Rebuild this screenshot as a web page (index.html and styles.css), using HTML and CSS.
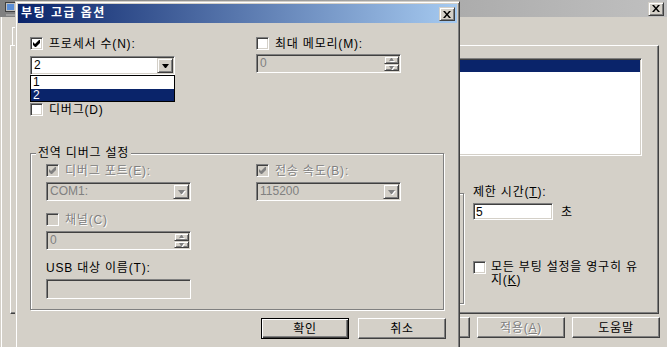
FILE: index.html
```html
<!DOCTYPE html>
<html lang="ko">
<head>
  <meta charset="UTF-8">
  <meta name="viewport" content="width=device-width, initial-scale=1.0">
  <title>부팅 고급 옵션</title>
  <link rel="stylesheet" href="styles.css">
</head>
<body>
  <div class="desk">
    <!-- 뒤쪽 시스템 구성 창 -->
    <div class="bg-win">
      <div class="bg-title">
        <svg class="app-icon" width="11" height="14" viewBox="0 0 11 14">
          <rect x="0.5" y="0.5" width="10" height="9" fill="#c0c0c0" stroke="#404040"/>
          <rect x="2" y="2" width="7" height="6" fill="#5a8ed8"/>
          <rect x="3" y="10" width="5" height="2" fill="#808080"/>
          <rect x="1" y="12" width="9" height="2" fill="#a0a0a0"/>
        </svg>
        <span class="btn-x">
          <svg width="8" height="7" viewBox="0 0 8 7"><path d="M0 0h2l2 2.5L6 0h2L5 3.5 8 7H6L4 4.5 2 7H0l3-3.5z"/></svg>
        </span>
      </div>
      <div class="bg-tab"></div>
      <div class="bg-panel">
        <div class="bg-list"><div class="bg-list-sel"></div></div>
        <div class="bg-lower">
          <div class="bg-group"></div>
          <div class="bg-side">
            <div class="lbl">제한 시간(<u>T</u>):</div>
            <div class="timeout">
              <span class="field field-timeout">5</span>
              <span class="unit">초</span>
            </div>
            <div class="check check-keep">
              <span class="box"></span>
              <span>모든 부팅 설정을 영구히 유<br>지(<u>K</u>)</span>
            </div>
          </div>
        </div>
      </div>
      <div class="bg-buttons">
        <button class="btn">취소</button>
        <button class="btn dis">적용(<u>A</u>)</button>
        <button class="btn">도움말</button>
      </div>
    </div>

    <!-- 부팅 고급 옵션 대화 상자 -->
    <div class="dialog">
      <div class="dlg-title">
        <span>부팅 고급 옵션</span>
        <span class="btn-x">
          <svg width="8" height="7" viewBox="0 0 8 7"><path d="M0 0h2l2 2.5L6 0h2L5 3.5 8 7H6L4 4.5 2 7H0l3-3.5z"/></svg>
        </span>
      </div>
      <div class="dlg-body">
        <div class="cols">
          <div class="col">
            <div class="check">
              <span class="box"><svg width="7" height="7" viewBox="0 0 7 7"><path d="M0 2L2 4L6 0H7V3L3 7H2L0 5Z"/></svg></span>
              <span>프로세서 수(N):</span>
            </div>
            <div class="combo combo-cpu">
              <span class="combo-val">2</span>
              <span class="drop"><svg width="7" height="4" viewBox="0 0 7 4"><path d="M0 0H7L4 4H3Z"/></svg></span>
            </div>
            <div class="check check-debug">
              <span class="box"></span>
              <span>디버그(D)</span>
            </div>
          </div>
          <div class="col">
            <div class="check">
              <span class="box"></span>
              <span>최대 메모리(M):</span>
            </div>
            <div class="spin off spin-mem">
              <span class="combo-val">0</span>
              <span class="spin-btns">
                <span class="spin-b"><svg width="5" height="3" viewBox="0 0 5 3"><path d="M2 0H3L5 3H0Z"/></svg></span>
                <span class="spin-b"><svg width="5" height="3" viewBox="0 0 5 3"><path d="M0 0H5L3 3H2Z"/></svg></span>
              </span>
            </div>
          </div>
        </div>

        <div class="droplist">
          <div class="opt">1</div>
          <div class="opt sel">2</div>
        </div>

        <div class="group">
          <span class="legend">전역 디버그 설정</span>
          <div class="cols cols-group">
            <div class="col">
              <div class="check dis">
                <span class="box off"><svg width="7" height="7" viewBox="0 0 7 7"><path d="M0 2L2 4L6 0H7V3L3 7H2L0 5Z"/></svg></span>
                <span>디버그 포트(E):</span>
              </div>
              <div class="combo off combo-port">
                <span class="combo-val">COM1:</span>
                <span class="drop"><svg width="7" height="4" viewBox="0 0 7 4"><path d="M0 0H7L4 4H3Z"/></svg></span>
              </div>
              <div class="check dis check-chan">
                <span class="box off"></span>
                <span>채널(C)</span>
              </div>
              <div class="spin off spin-chan">
                <span class="combo-val">0</span>
                <span class="spin-btns">
                  <span class="spin-b"><svg width="5" height="3" viewBox="0 0 5 3"><path d="M2 0H3L5 3H0Z"/></svg></span>
                  <span class="spin-b"><svg width="5" height="3" viewBox="0 0 5 3"><path d="M0 0H5L3 3H2Z"/></svg></span>
                </span>
              </div>
              <div class="lbl lbl-usb">USB 대상 이름(T):</div>
              <div class="field off field-usb"></div>
            </div>
            <div class="col">
              <div class="check dis">
                <span class="box off"><svg width="7" height="7" viewBox="0 0 7 7"><path d="M0 2L2 4L6 0H7V3L3 7H2L0 5Z"/></svg></span>
                <span>전송 속도(B):</span>
              </div>
              <div class="combo off combo-port">
                <span class="combo-val">115200</span>
                <span class="drop"><svg width="7" height="4" viewBox="0 0 7 4"><path d="M0 0H7L4 4H3Z"/></svg></span>
              </div>
            </div>
          </div>
        </div>

        <div class="dlg-buttons">
          <button class="btn default">확인</button>
          <button class="btn">취소</button>
        </div>
      </div>
    </div>
  </div>
</body>
</html>
```

FILE: styles.css
```css
body {
  margin: 0;
  background-color: #d4d0c8;
  font-family: "Liberation Sans", "Noto Sans CJK KR", sans-serif;
  font-size: 12px;
  line-height: 14px;
  color: #000;
}
.desk {
  position: relative;
  width: 667px;
  height: 347px;
  overflow: hidden;
  letter-spacing: 0.8px;
}

/* 공통 컨트롤 */
.btn {
  box-sizing: border-box;
  width: 88px;
  height: 21px;
  padding: 0;
  font: inherit;
  letter-spacing: inherit;
  color: #000;
  background-color: #d4d0c8;
  border: 1px solid;
  border-color: #fff #404040 #404040 #fff;
  box-shadow: inset -1px -1px #808080;
}
.btn.default {
  border-color: #000;
  box-shadow: inset 1px 1px #fff, inset -1px -1px #404040, inset -2px -2px #808080;
}
.dis,
.btn.dis {
  color: #808080;
  text-shadow: 1px 1px 0 #fff;
}
.btn-x {
  box-sizing: border-box;
  width: 16px;
  height: 14px;
  display: flex;
  align-items: center;
  justify-content: center;
  background-color: #d4d0c8;
  border: 1px solid;
  border-color: #d4d0c8 #404040 #404040 #d4d0c8;
  box-shadow: inset 1px 1px #fff, inset -1px -1px #808080;
}
.check {
  display: flex;
  align-items: center;
  gap: 6px;
  height: 13px;
}
.box {
  box-sizing: border-box;
  flex: none;
  width: 13px;
  height: 13px;
  display: flex;
  align-items: center;
  justify-content: center;
  background-color: #fff;
  border: 1px solid;
  border-color: #808080 #fff #fff #808080;
  box-shadow: inset 1px 1px #404040, inset -1px -1px #d4d0c8;
}
.box.off {
  background-color: #d4d0c8;
}
.box.off svg {
  fill: #808080;
}
.field,
.combo,
.spin {
  box-sizing: border-box;
  display: flex;
  align-items: center;
  padding: 1px;
  background-color: #fff;
  border: 1px solid;
  border-color: #808080 #fff #fff #808080;
  box-shadow: inset 1px 1px #404040, inset -1px -1px #d4d0c8;
}
.combo,
.spin {
  width: 145px;
  height: 19px;
}
.off {
  background-color: #d4d0c8;
  color: #808080;
}
.combo-val {
  flex: 1;
  padding-left: 2px;
  line-height: 15px;
  letter-spacing: 0;
}
.drop {
  box-sizing: border-box;
  width: 16px;
  height: 15px;
  display: flex;
  align-items: center;
  justify-content: center;
  background-color: #d4d0c8;
  border: 1px solid;
  border-color: #d4d0c8 #404040 #404040 #d4d0c8;
  box-shadow: inset 1px 1px #fff, inset -1px -1px #808080;
}
.off .drop svg,
.off .spin-b svg {
  fill: #808080;
  filter: drop-shadow(1px 1px 0 #fff);
}
.spin-btns {
  display: flex;
  flex-direction: column;
  width: 15px;
  height: 15px;
}
.spin-b {
  box-sizing: border-box;
  flex: 1;
  display: flex;
  align-items: center;
  justify-content: center;
  background-color: #d4d0c8;
  border: 1px solid;
  border-color: #d4d0c8 #404040 #404040 #d4d0c8;
  box-shadow: inset 1px 1px #fff, inset -1px -1px #808080;
}

/* 뒤쪽 창 */
.bg-win {
  height: 347px;
  box-shadow: inset 1px 0 #d4d0c8, inset 2px 0 #fff;
}
.bg-title {
  height: 17px;
  display: flex;
  align-items: center;
  justify-content: space-between;
  padding: 0 3px 0 5px;
  background: linear-gradient(to right, #808080, #c0c0c0);
}
.bg-tab {
  width: 200px;
  height: 17px;
  margin: 10px 0 0 12px;
  border-top: 1px solid #fff;
  border-left: 1px solid #fff;
}
.bg-panel {
  box-sizing: border-box;
  width: 649px;
  height: 269px;
  margin-left: 10px;
  padding: 12px 16px 0 19px;
  border: 1px solid;
  border-color: #fff #404040 #404040 #fff;
  box-shadow: inset -1px -1px #808080;
}
.bg-list {
  box-sizing: border-box;
  height: 98px;
  padding: 1px;
  background-color: #fff;
  border: 1px solid;
  border-color: #808080 #fff #fff #808080;
  box-shadow: inset 1px 1px #404040, inset -1px -1px #d4d0c8;
}
.bg-list-sel {
  height: 12px;
  background-color: #0a246a;
}
.bg-lower {
  display: flex;
  align-items: flex-start;
}
.bg-group {
  width: 432px;
  height: 109px;
  margin-top: 37px;
  border: 1px solid #808080;
  box-shadow: 1px 1px 0 #fff, inset 1px 1px 0 #fff;
}
.bg-side {
  margin: 29px 0 0 9px;
}
.timeout {
  display: flex;
  align-items: center;
  margin-top: 4px;
}
.field-timeout {
  width: 80px;
  height: 17px;
  padding-left: 2px;
}
.unit {
  margin-left: 8px;
}
.check-keep {
  align-items: flex-start;
  height: auto;
  margin-top: 41px;
  gap: 5px;
  line-height: 13px;
}
.bg-buttons {
  display: flex;
  justify-content: flex-end;
  gap: 7px;
  margin-top: 3px;
  padding-right: 7px;
}

/* 대화 상자 */
.dialog {
  position: absolute;
  left: 15px;
  top: 1px;
  box-sizing: border-box;
  width: 445px;
  height: 370px;
  padding: 2px;
  background-color: #d4d0c8;
  border: 1px solid;
  border-color: #d4d0c8 #404040 #404040 #d4d0c8;
  box-shadow: inset 1px 1px #fff, inset -1px -1px #808080;
}
.dlg-title {
  height: 19px;
  display: flex;
  align-items: flex-start;
  justify-content: space-between;
  padding: 0 2px 0 3px;
  background: linear-gradient(to right, #0a246a, #a6caf0);
  color: #fff;
  font-weight: bold;
  line-height: 19px;
  letter-spacing: 1.5px;
}
.dlg-title .btn-x {
  margin-top: 3px;
}
.dlg-body {
  position: relative;
  padding: 14px 12px 0 12px;
}
.cols {
  display: grid;
  grid-template-columns: 145px 145px;
  column-gap: 81px;
}
.col {
  display: flex;
  flex-direction: column;
}
.combo-cpu {
  margin-top: 6px;
}
.check-debug {
  margin-top: 28px;
}
.spin-mem {
  margin-top: 4px;
}
.droplist {
  position: absolute;
  left: 12px;
  top: 52px;
  box-sizing: border-box;
  width: 145px;
  height: 27px;
  background-color: #fff;
  border: 1px solid #000;
}
.opt {
  height: 13px;
  line-height: 13px;
  padding-left: 2px;
}
.opt.sel {
  height: 12px;
  line-height: 12px;
  background-color: #0a246a;
  color: #fff;
}
.group {
  position: relative;
  box-sizing: border-box;
  width: 414px;
  height: 157px;
  margin-top: 37px;
  padding: 10px 0 0 15px;
  border: 1px solid #808080;
  box-shadow: 1px 1px 0 #fff, inset 1px 1px 0 #fff;
}
.legend {
  position: absolute;
  left: 5px;
  top: -8px;
  padding: 0 2px;
  background-color: #d4d0c8;
}
.cols-group {
  column-gap: 65px;
}
.combo-port {
  margin-top: 5px;
}
.check-chan {
  margin-top: 12px;
}
.spin-chan {
  margin-top: 5px;
}
.lbl-usb {
  margin-top: 11px;
}
.field-usb {
  width: 145px;
  height: 20px;
  margin-top: 4px;
}
.dlg-buttons {
  display: flex;
  justify-content: flex-end;
  gap: 9px;
  margin: 8px -1px 0 0;
}
```
